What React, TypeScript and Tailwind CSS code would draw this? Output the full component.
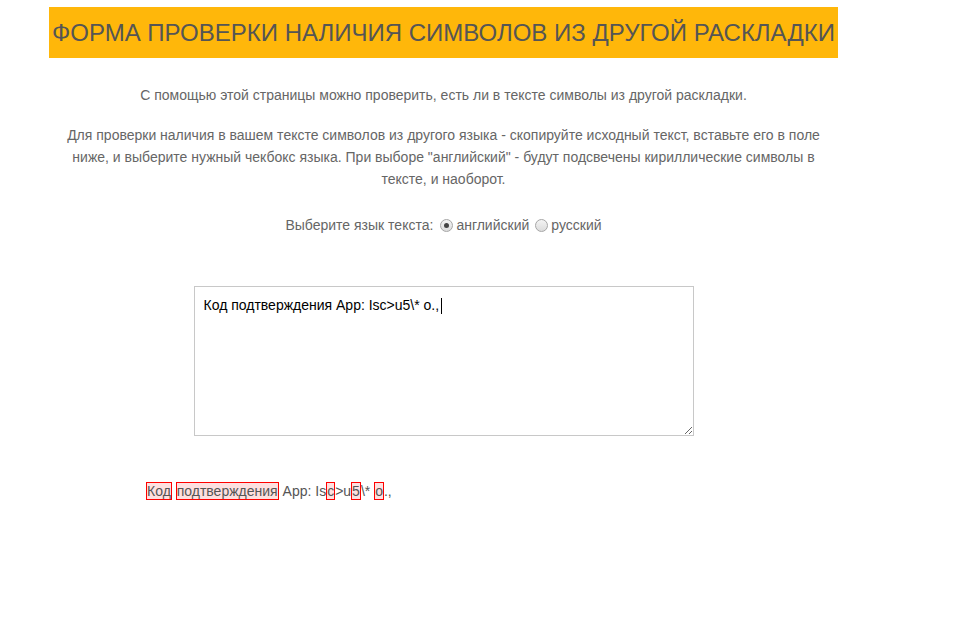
import { useState } from "react";

interface Part {
  text: string;
  mark?: boolean;
}

const parts: Part[] = [
  { text: "Код", mark: true },
  { text: " " },
  { text: "подтверждения", mark: true },
  { text: " App: Is" },
  { text: "с", mark: true },
  { text: ">u" },
  { text: "5", mark: true },
  { text: "\\* " },
  { text: "о", mark: true },
  { text: ".," },
];

const Radio = ({ checked, label }: { checked: boolean; label: string }) => {
  return (
    <label className="inline-flex items-center gap-[3px]">
      <span className="flex h-[13px] w-[13px] items-center justify-center rounded-full border border-[#a6a6a6] bg-gradient-to-b from-[#f4f4f4] to-[#dcdcdc]">
        {checked && <span className="h-[5px] w-[5px] rounded-full bg-[#444]" />}
      </span>
      <span>{label}</span>
    </label>
  );
};

export default function App() {
  const [lang] = useState("en");
  return (
    <div className="min-h-[619px] bg-white font-['Liberation_Sans',Arial,sans-serif]">
      <div className="ml-[49px] w-[789px] pt-[7px]">
        <h1 className="flex h-[51px] items-center bg-[#ffb70a] pl-[3px] text-[24px] leading-none text-[#555]">
          ФОРМА ПРОВЕРКИ НАЛИЧИЯ СИМВОЛОВ ИЗ ДРУГОЙ РАСКЛАДКИ
        </h1>
        <div className="px-[14px] text-center text-[14px] leading-[22px] text-[#666]">
          <p className="mt-[26px]">
            С помощью этой страницы можно проверить, есть ли в тексте символы из другой раскладки.
          </p>
          <p className="mt-[18px]">
            Для проверки наличия в вашем тексте символов из другого языка - скопируйте исходный текст, вставьте его в поле ниже, и выберите нужный чекбокс языка. При выборе "английский" - будут подсвечены кириллические символы в тексте, и наоборот.
          </p>
          <div className="mt-[24px] flex items-center justify-center gap-[6px]">
            <span className="mr-[1px]">Выберите язык текста:</span>
            <Radio checked={lang === "en"} label="английский" />
            <Radio checked={lang === "ru"} label="русский" />
          </div>
        </div>
        <div className="mt-[50px] flex justify-center">
          <div className="relative">
            <textarea
              className="block h-[150px] w-[500px] border border-[#c8c8c8] px-[9px] py-[9px] text-[14px] leading-[18px] text-black outline-none"
              defaultValue={"Код подтверждения App: Isc>u5\\* о.,"}
            />
            <span className="absolute left-[247px] top-[12px] h-[16px] w-[1px] bg-black" />
          </div>
        </div>
        <div className="mt-[45px] pl-[97px] text-[14px] leading-[20px] text-[#555]">
          {parts.map((p, i) =>
            p.mark ? (
              <span key={i} className="border border-[#ff0000] bg-[#fde0e0]">
                {p.text}
              </span>
            ) : (
              <span key={i} className="whitespace-pre">{p.text}</span>
            )
          )}
        </div>
      </div>
    </div>
  );
}
